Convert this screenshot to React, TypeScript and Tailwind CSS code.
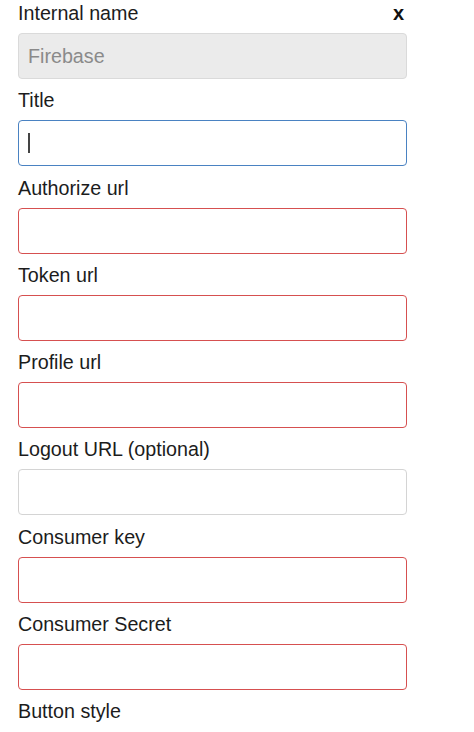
import React from "react";

type Field = { label: string; kind: "disabled" | "focus" | "error" | "normal"; value?: string };

const fields: Field[] = [
  { label: "Internal name", kind: "disabled", value: "Firebase" },
  { label: "Title", kind: "focus" },
  { label: "Authorize url", kind: "error" },
  { label: "Token url", kind: "error" },
  { label: "Profile url", kind: "error" },
  { label: "Logout URL (optional)", kind: "normal" },
  { label: "Consumer key", kind: "error" },
  { label: "Consumer Secret", kind: "error" },
];

function Box({ f }: { f: Field }) {
  if (f.kind === "disabled") {
    return (
      <input
        disabled
        value={f.value}
        readOnly
        className="block h-[46px] w-full rounded-[4px] border border-[#dadada] bg-[#ebebeb] px-[9px] text-[19.7px] text-[#8a8a8a] outline-none"
      />
    );
  }
  if (f.kind === "focus") {
    return (
      <div className="flex h-[46px] w-full items-center rounded-[4px] border-[1.5px] border-[#4a82c2] bg-white px-[9px]">
        <div className="h-[20px] w-[2px] bg-[#444]" />
      </div>
    );
  }
  const border = f.kind === "error" ? "border-[#d65050]" : "border-[#d4d4d4]";
  return (
    <input
      readOnly
      className={`block h-[46px] w-full rounded-[4px] border-[1.5px] ${border} bg-white px-[9px] text-[19.7px] outline-none`}
    />
  );
}

export default function App() {
  return (
    <div className="min-h-screen overflow-hidden bg-white font-['Liberation_Sans',Arial,sans-serif] text-[#1c1c1c]">
      <div className="ml-[18px] mt-[-1px] w-[389px]">
        {fields.map((f, i) => (
          <div key={f.label} className="mb-[7.3px]">
            <div className="mb-[6px] flex h-[28px] items-baseline justify-between text-[19.7px] leading-[28px]">
              <span>{f.label}</span>
              {i === 0 && <span className="mr-[3px] text-[20px] font-bold text-[#111]">x</span>}
            </div>
            <Box f={f} />
          </div>
        ))}
        <div className="h-[28px] text-[19.7px] leading-[28px]">Button style</div>
      </div>
    </div>
  );
}
